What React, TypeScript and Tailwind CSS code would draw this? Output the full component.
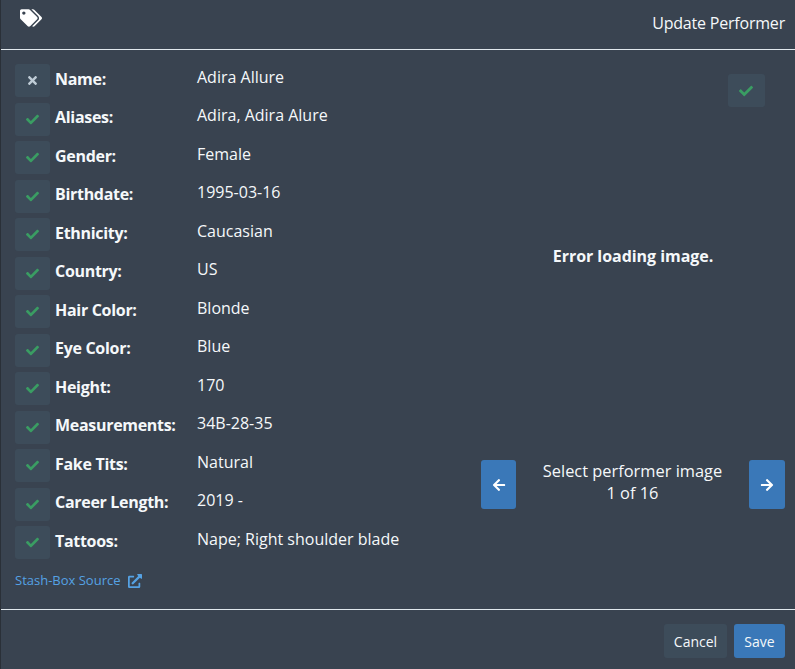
import React from 'react';
import { FaTags, FaCheck, FaTimes, FaArrowLeft, FaArrowRight, FaExternalLinkAlt } from 'react-icons/fa';

const rows: [string, string][] = [
  ['Aliases:', 'Adira, Adira Alure'],
  ['Gender:', 'Female'],
  ['Birthdate:', '1995-03-16'],
  ['Ethnicity:', 'Caucasian'],
  ['Country:', 'US'],
  ['Hair Color:', 'Blonde'],
  ['Eye Color:', 'Blue'],
  ['Height:', '170'],
  ['Measurements:', '34B-28-35'],
  ['Fake Tits:', 'Natural'],
  ['Career Length:', '2019 -'],
  ['Tattoos:', 'Nape; Right shoulder blade'],
];

function Row({ label, value, off }: { label: string; value: string; off?: boolean }) {
  return (
    <div className="flex items-center h-[33px] mb-[5.5px]">
      <button className="w-[35px] h-[33px] shrink-0 flex items-center justify-center rounded-[3px] bg-[#3d4c5a]">
        {off ? (
          <FaTimes className="w-[11px] h-[13px] text-[#bfccd6]" />
        ) : (
          <FaCheck className="w-[13px] h-[13px] text-[#3a9d63] -ml-[1px]" />
        )}
      </button>
      <span className="w-[147px] pl-[5px] shrink-0 font-bold text-[16px] tracking-[-0.3px] text-[#f5f8fa] -mt-[4px]">{label}</span>
      <span className="text-[16px] text-[#f5f8fa] -mt-[8px]">{value}</span>
    </div>
  );
}

export default function App() {
  return (
    <div className="w-[795px] h-[669px] bg-[#394350] border-l border-[#2a3038] flex flex-col text-[#f5f8fa] font-['Open_Sans','Noto_Sans',sans-serif] overflow-hidden">
      {/* Header */}
      <div className="h-[50px] shrink-0 flex justify-between border-b border-[#e1e8ed] pl-[19px] pr-[10px]">
        <FaTags className="w-[22px] h-[18px] mt-[9px] text-white" />
        <span className="text-[16px] tracking-[-0.2px] mt-[11px]">Update Performer</span>
      </div>

      {/* Body */}
      <div className="flex-1 flex pt-[14px] pl-[14px] pr-[10px]">
        <div className="w-[466px] shrink-0">
          <Row label="Name:" value="Adira Allure" off />
          {rows.map(([l, v]) => (
            <Row key={l} label={l} value={v} />
          ))}
          <a className="flex items-center gap-[7px] mt-[12px] text-[13px] text-[#55a2e4]">
            Stash-Box Source
            <FaExternalLinkAlt className="w-[14px] h-[14px]" />
          </a>
        </div>

        <div className="flex-1 flex flex-col">
          <div className="flex justify-end mt-[10px] pr-[20px]">
            <button className="w-[37px] h-[33px] flex items-center justify-center rounded-[3px] bg-[#3d4c5a]">
              <FaCheck className="w-[14px] h-[14px] text-[#3a9d63] -ml-[2px]" />
            </button>
          </div>
          <div className="h-[353px] flex items-center justify-center font-bold text-[16px] tracking-[-0.05px] pb-[56px]">
            Error loading image.
          </div>
          <div className="flex items-center justify-between">
            <button className="w-[35px] h-[49px] flex items-center justify-center rounded-[3px] bg-[#3a78b8]">
              <FaArrowLeft className="w-[14px] h-[14px] text-white" />
            </button>
            <div className="text-center text-[16.4px] leading-[22px] -mt-[6px]">
              <div>Select performer image</div>
              <div>1 of 16</div>
            </div>
            <button className="w-[36px] h-[49px] flex items-center justify-center rounded-[3px] bg-[#3a78b8]">
              <FaArrowRight className="w-[14px] h-[14px] text-white" />
            </button>
          </div>
        </div>
      </div>

      {/* Footer */}
      <div className="h-[60px] shrink-0 flex justify-end gap-[7px] border-t border-[#e1e8ed] pt-[14px] pr-[10px]">
        <button className="w-[63px] h-[34px] rounded-[3px] bg-[#3d4c5a] text-[14px]">Cancel</button>
        <button className="w-[51px] h-[34px] rounded-[3px] bg-[#3a78b8] text-[14px]">Save</button>
      </div>
    </div>
  );
}
